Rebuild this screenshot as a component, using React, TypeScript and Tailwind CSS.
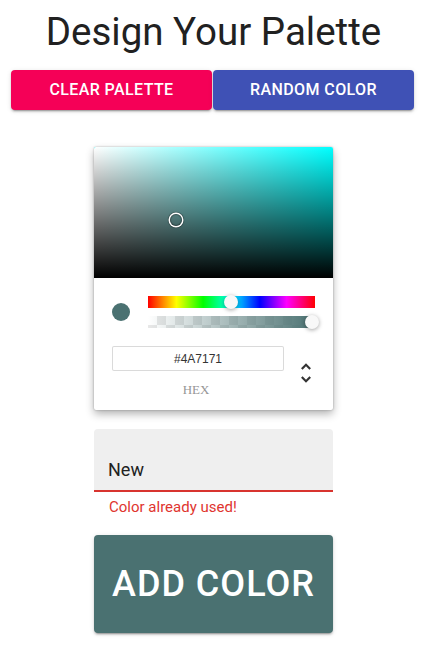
import React from 'react';

const App = () => {
  return (
    <div className="min-h-[651px] bg-white font-[Roboto,sans-serif]">
      <div className="ml-[11px] flex w-[405px] flex-col items-center pt-[8px]">
        <h1 className="text-[38.5px] leading-[48px] font-normal text-[#212121]">Design Your Palette</h1>

        {/* Top buttons */}
        <div className="mt-[14px] flex self-start">
          <button className="h-[40px] w-[201px] rounded-[4px] bg-[#f50057] text-[16px] font-medium tracking-[0.4px] text-white uppercase shadow-[0_3px_1px_-2px_rgba(0,0,0,0.2),0_2px_2px_0_rgba(0,0,0,0.14),0_1px_5px_0_rgba(0,0,0,0.12)]">
            Clear Palette
          </button>
          <button className="ml-[1px] h-[40px] w-[201px] rounded-[4px] bg-[#3f51b5] text-[16px] font-medium tracking-[0.4px] text-white uppercase shadow-[0_3px_1px_-2px_rgba(0,0,0,0.2),0_2px_2px_0_rgba(0,0,0,0.14),0_1px_5px_0_rgba(0,0,0,0.12)]">
            Random Color
          </button>
        </div>

        {/* Chrome style picker */}
        <div className="mt-[37px] w-[239px] overflow-hidden rounded-[2px] bg-white shadow-[0_0_2px_rgba(0,0,0,0.3),0_4px_8px_rgba(0,0,0,0.3)]">
          <div className="relative h-[131px] bg-[#00ffff]">
            <div className="absolute inset-0 bg-[linear-gradient(to_right,#fff,rgba(255,255,255,0))]" />
            <div className="absolute inset-0 bg-[linear-gradient(to_top,#000,rgba(0,0,0,0))]" />
            <div className="absolute top-[67px] left-[76px] h-[12px] w-[12px] rounded-full shadow-[0_0_0_1.5px_#fff,inset_0_0_1px_1px_rgba(0,0,0,0.3),0_0_1px_2px_rgba(0,0,0,0.4)]" />
          </div>

          <div className="px-[18px] pt-[18px] pb-[14px]">
            <div className="flex items-center">
              <div className="w-[36px]">
                <div className="h-[18px] w-[18px] rounded-full bg-[#4a7171]" />
              </div>
              <div className="flex flex-1 flex-col gap-[8px]">
                <div className="relative h-[12px] bg-[linear-gradient(to_right,#f00_0%,#ff0_17%,#0f0_33%,#0ff_50%,#00f_67%,#f0f_83%,#f00_100%)]">
                  <div className="absolute top-[-1px] left-[76px] h-[14px] w-[14px] rounded-full bg-[#f8f8f8] shadow-[0_1px_4px_0_rgba(0,0,0,0.37)]" />
                </div>
                <div className="relative h-[12px] bg-[repeating-conic-gradient(#e8e8e8_0%_25%,#fff_0%_50%)] bg-[length:18px_18px]">
                  <div className="absolute inset-0 bg-[linear-gradient(to_right,rgba(74,113,113,0),#4a7171)]" />
                  <div className="absolute top-[-1px] right-[-4px] h-[14px] w-[14px] rounded-full bg-[#f8f8f8] shadow-[0_1px_4px_0_rgba(0,0,0,0.37)]" />
                </div>
              </div>
            </div>

            <div className="mt-[18px] flex">
              <div className="flex w-[172px] flex-col items-center">
                <div className="flex h-[25px] w-full items-center justify-center rounded-[2px] font-[Liberation_Sans,Arial,sans-serif] text-[12px] text-[#333] shadow-[inset_0_0_0_1px_#dadada]">
                  #4A7171
                </div>
                <div className="mt-[12px] mr-[4px] font-['Liberation_Serif',serif] text-[13px] leading-none text-[#969696] uppercase">hex</div>
              </div>
              <div className="mr-[-4px] flex flex-1 justify-end pt-[14px]">
                <svg viewBox="0 0 24 24" className="h-[26px] w-[26px]">
                  <path
                    fill="#333"
                    d="M12,18.17L8.83,15L7.42,16.41L12,21L16.59,16.41L15.17,15M12,5.83L15.17,9L16.58,7.59L12,3L7.41,7.59L8.83,9L12,5.83Z"
                  />
                </svg>
              </div>
            </div>
          </div>
        </div>

        {/* Name field */}
        <div className="mt-[19px] w-[239px]">
          <div className="rounded-t-[4px] border-b-2 border-[#d8342f] bg-[#efefef] pt-[31px] pb-[10px] pl-[14px] text-[18px] leading-[20px] text-[#212121]">
            New
          </div>
          <div className="mt-[6px] ml-[15px] text-[15px] leading-[18px] text-[#e0352f]">Color already used!</div>
        </div>

        <button className="mt-[19px] h-[98px] w-[239px] rounded-[4px] bg-[#4a7171] text-[36px] font-medium tracking-[1px] text-white uppercase shadow-[0_3px_1px_-2px_rgba(0,0,0,0.2),0_2px_2px_0_rgba(0,0,0,0.14),0_1px_5px_0_rgba(0,0,0,0.12)]">
          Add Color
        </button>
      </div>
    </div>
  );
};

export default App;
